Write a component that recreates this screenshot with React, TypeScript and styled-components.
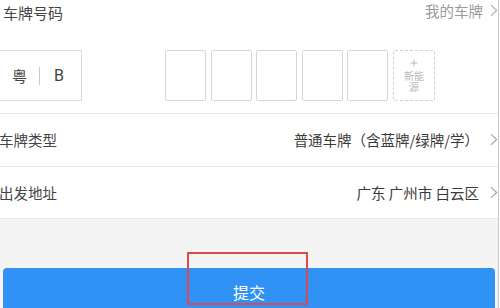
import React from 'react'
import styled, { createGlobalStyle } from 'styled-components'

const GlobalStyle = createGlobalStyle`
  html, body {
    margin: 0;
    padding: 0;
    background: #ffffff;
  }
  body {
    font-family: "Noto Sans CJK SC", "Noto Sans", sans-serif;
  }
`;

function Chevron({ color = '#a8a8a8' }: { color?: string }) {
  return (
    <ChevronBox>
      <svg width="9" height="15" viewBox="0 0 9 15">
        <polyline points="1,1.5 7.5,7.5 1,13.5" fill="none" stroke={color} strokeWidth="1.4" />
      </svg>
    </ChevronBox>
  )
}

function PlusIcon() {
  return (
    <PlusBox>
      <svg width="8" height="8" viewBox="0 0 8 8">
        <path d="M4 0.5V7.5M0.5 4H7.5" stroke="#b8b8b8" strokeWidth="1" fill="none" />
      </svg>
    </PlusBox>
  )
}

const cells = [0, 1, 2, 3, 4]

function App() {
  return (
    <>
      <GlobalStyle />
      <Page>
        <PlateSection>
          <Header>
            <Title>车牌号码</Title>
            <HeaderLink>
              我的车牌
              <Chevron color="#b0b0b0" />
            </HeaderLink>
          </Header>
          <PlateRow>
            <Province>
              <span>粤</span>
              <Sep />
              <Letter>B</Letter>
            </Province>
            <Cells>
              {cells.map((i) => (
                <Cell key={i} />
              ))}
              <NewEnergy>
                <PlusIcon />
                <EnergyText>新能源</EnergyText>
              </NewEnergy>
            </Cells>
          </PlateRow>
        </PlateSection>
        <Row>
          <Label>车牌类型</Label>
          <Value>
            普通车牌（含蓝牌/绿牌/学）
            <Chevron />
          </Value>
        </Row>
        <Row>
          <Label>出发地址</Label>
          <Value>
            广东 广州市 白云区
            <Chevron />
          </Value>
        </Row>
        <Footer>
          <SubmitButton>提交</SubmitButton>
          <Highlight />
        </Footer>
      </Page>
    </>
  )
}

export default App

const Page = styled.div`
  position: relative;
  width: 498px;
  height: 308px;
  border-right: 1px solid #c9c9c9;
  overflow: hidden;
  display: flex;
  flex-direction: column;
  background: #ffffff;
`;

const PlateSection = styled.div`
  flex-shrink: 0;
  padding-bottom: 12px;
  border-bottom: 1px solid #e9e9e9;
`;

const Header = styled.div`
  height: 24px;
  display: flex;
  align-items: center;
  justify-content: space-between;
  padding-left: 3px;
`;

const Title = styled.div`
  font-size: 15px;
  color: #444444;
`;

const HeaderLink = styled.div`
  display: flex;
  align-items: center;
  gap: 7px;
  font-size: 14.5px;
  color: #9a9a9a;
  margin-top: -4px;
`;

const ChevronBox = styled.span`
  display: inline-flex;
  width: 8px;
  overflow: hidden;
`;

const PlateRow = styled.div`
  margin-top: 26px;
  display: flex;
  align-items: stretch;
  height: 51px;
`;

const Province = styled.div`
  width: 82px;
  box-sizing: border-box;
  border: 1px solid #dadada;
  border-left: none;
  display: flex;
  align-items: center;
  padding-left: 12px;
  font-size: 15px;
  color: #444444;
`;

const Sep = styled.span`
  width: 1px;
  height: 18px;
  background: #c8c8c8;
  margin: 0 14px 0 12px;
`;

const Letter = styled.span`
  font-family: "Roboto", "Noto Sans", sans-serif;
  font-size: 16px;
  color: #444444;
`;

const Cells = styled.div`
  margin-left: 83px;
  display: flex;
  gap: 4.6px;
`;

const Cell = styled.div`
  width: 41px;
  box-sizing: border-box;
  border: 1px solid #d6d6d6;
  border-radius: 2px;
`;

const NewEnergy = styled.div`
  width: 42px;
  box-sizing: border-box;
  border: 1px dashed #d0d0d0;
  border-radius: 2px;
  display: flex;
  flex-direction: column;
  align-items: center;
  justify-content: center;
  color: #b8b8b8;
`;

const PlusBox = styled.span`
  display: flex;
  height: 8px;
  margin-bottom: 3px;
`;

const EnergyText = styled.span`
  width: 21px;
  text-align: center;
  font-size: 10px;
  line-height: 11.5px;
`;

const Row = styled.div`
  flex-shrink: 0;
  height: 51.5px;
  border-bottom: 1px solid #e9e9e9;
  display: flex;
  align-items: center;
  justify-content: space-between;
`;

const Label = styled.div`
  font-size: 14.5px;
  color: #444444;
  margin-left: -1px;
`;

const Value = styled.div`
  display: flex;
  align-items: center;
  gap: 11px;
  font-size: 14.5px;
  color: #3a3a3a;
`;

const Footer = styled.div`
  position: relative;
  flex: 1 0 auto;
  background: #f5f4f5;
  padding: 49px 3px 0 3px;
`;

const SubmitButton = styled.button`
  display: flex;
  align-items: center;
  justify-content: center;
  width: 492px;
  height: 48px;
  border: none;
  border-radius: 4px;
  background: #3092f4;
  color: #ffffff;
  font-family: "Noto Sans CJK SC", sans-serif;
  font-size: 16px;
  padding: 0;
`;

const Highlight = styled.div`
  position: absolute;
  left: 187px;
  top: 33px;
  width: 121px;
  height: 53px;
  box-sizing: border-box;
  border: 2px solid #e0474f;
`;
